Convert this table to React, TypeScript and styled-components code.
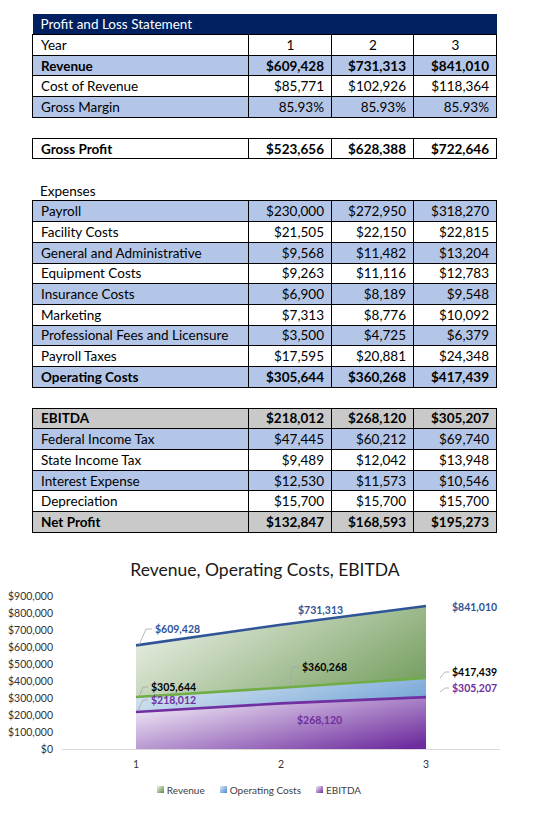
import styled, { createGlobalStyle } from 'styled-components';

const GlobalStyle = createGlobalStyle`
  body {
    margin: 0;
    background: #ffffff;
    font-family: Lato, "Liberation Sans", sans-serif;
    color: #000000;
  }
`;

type Tone = 'blue' | 'white' | 'gray';

type Row = {
  label: string;
  values: string[];
  tone: Tone;
  bold?: boolean;
  center?: boolean;
};

const TONES: Record<Tone, string> = {
  blue: '#b4c6e7',
  white: '#ffffff',
  gray: '#c9c9c9',
};

const summaryRows: Row[] = [
  { label: 'Year', values: ['1', '2', '3'], tone: 'white', center: true },
  { label: 'Revenue', values: ['$609,428', '$731,313', '$841,010'], tone: 'blue', bold: true },
  { label: 'Cost of Revenue', values: ['$85,771', '$102,926', '$118,364'], tone: 'white' },
  { label: 'Gross Margin', values: ['85.93%', '85.93%', '85.93%'], tone: 'blue' },
];

const grossRows: Row[] = [
  { label: 'Gross Profit', values: ['$523,656', '$628,388', '$722,646'], tone: 'white', bold: true },
];

const expenseRows: Row[] = [
  { label: 'Payroll', values: ['$230,000', '$272,950', '$318,270'], tone: 'blue' },
  { label: 'Facility Costs', values: ['$21,505', '$22,150', '$22,815'], tone: 'white' },
  { label: 'General and Administrative', values: ['$9,568', '$11,482', '$13,204'], tone: 'blue' },
  { label: 'Equipment Costs', values: ['$9,263', '$11,116', '$12,783'], tone: 'white' },
  { label: 'Insurance Costs', values: ['$6,900', '$8,189', '$9,548'], tone: 'blue' },
  { label: 'Marketing', values: ['$7,313', '$8,776', '$10,092'], tone: 'white' },
  { label: 'Professional Fees and Licensure', values: ['$3,500', '$4,725', '$6,379'], tone: 'blue' },
  { label: 'Payroll Taxes', values: ['$17,595', '$20,881', '$24,348'], tone: 'white' },
  { label: 'Operating Costs', values: ['$305,644', '$360,268', '$417,439'], tone: 'blue', bold: true },
];

const profitRows: Row[] = [
  { label: 'EBITDA', values: ['$218,012', '$268,120', '$305,207'], tone: 'gray', bold: true },
  { label: 'Federal Income Tax', values: ['$47,445', '$60,212', '$69,740'], tone: 'blue' },
  { label: 'State Income Tax', values: ['$9,489', '$12,042', '$13,948'], tone: 'white' },
  { label: 'Interest Expense', values: ['$12,530', '$11,573', '$10,546'], tone: 'blue' },
  { label: 'Depreciation', values: ['$15,700', '$15,700', '$15,700'], tone: 'white' },
  { label: 'Net Profit', values: ['$132,847', '$168,593', '$195,273'], tone: 'gray', bold: true },
];

const series = [
  { name: 'Revenue', values: [609428, 731313, 841010], line: '#2f5597', from: '#eef2ea', to: '#5b8c41' },
  { name: 'Operating Costs', values: [305644, 360268, 417439], line: '#70ad47', from: '#dfe9f4', to: '#4a8bcb' },
  { name: 'EBITDA', values: [218012, 268120, 305207], line: '#7030a0', from: '#f6f1fa', to: '#6e2c9e' },
];

const X = [136, 281, 426];
const BASE = 164;
const yOf = (v: number) => BASE - (v * 153) / 900000;

const labels = [
  { text: '$609,428', x: 155, y: 44, color: '#2f5597', leader: '152,44 146,44 139,60' },
  { text: '$731,313', x: 298, y: 25, color: '#2f5597', leader: '' },
  { text: '$841,010', x: 452, y: 22, color: '#2f5597', leader: '' },
  { text: '$360,268', x: 302, y: 82, color: '#000000', leader: '299,82 292,82 290,101' },
  { text: '$417,439', x: 452, y: 87, color: '#000000', leader: '449,87 445,87 440,93' },
  { text: '$305,207', x: 452, y: 103, color: '#7030a0', leader: '449,103 445,103 440,107' },
  { text: '$305,644', x: 151, y: 102, color: '#000000', leader: '148,102 143,102 139,112' },
  { text: '$218,012', x: 151, y: 115, color: '#7030a0', leader: '148,115 143,115 138,125' },
  { text: '$268,120', x: 297, y: 135, color: '#7030a0', leader: '' },
];

const Page = styled.div`
  width: 540px;
  display: flex;
  flex-direction: column;
`;

const Sheet = styled.div`
  padding: 14px 0 0 32px;
  display: flex;
  flex-direction: column;
`;

const Table = styled.table<{ $gap?: number }>`
  width: 464px;
  border-collapse: collapse;
  table-layout: fixed;
  margin-bottom: ${({ $gap }) => $gap ?? 0}px;
  font-size: 13.5px;
`;

const HeadCell = styled.td`
  height: 20px;
  padding: 0 8px;
  background: #002060;
  color: #ffffff;
  border-bottom: 1px solid #000000;
`;

const Tr = styled.tr<{ $tone: Tone; $bold?: boolean }>`
  background: ${({ $tone }) => TONES[$tone]};
  font-weight: ${({ $bold }) => ($bold ? 700 : 400)};
`;

const Td = styled.td<{ $align: 'left' | 'right' | 'center' }>`
  height: 19.7px;
  padding: 0 7px 0 8px;
  border: 1px solid #000000;
  text-align: ${({ $align }) => $align};
  white-space: nowrap;
`;

const SectionLabel = styled.div`
  height: 20px;
  line-height: 22px;
  padding-left: 8px;
  margin-top: 21px;
  font-size: 13.5px;
`;

const Chart = styled.div`
  margin-top: 22px;
  display: flex;
  flex-direction: column;
`;

const ChartTitle = styled.div`
  height: 30px;
  line-height: 30px;
  text-align: center;
  font-size: 17.5px;
  color: #1a1a1a;
  padding-right: 10px;
`;

const Legend = styled.div`
  height: 30px;
  display: flex;
  align-items: center;
  justify-content: center;
  gap: 15px;
  padding-right: 22px;
  font-size: 10px;
  color: #404040;
`;

const LegendItem = styled.div`
  display: flex;
  align-items: center;
  gap: 3px;
`;

const Swatch = styled.span<{ $from: string; $to: string }>`
  width: 7px;
  height: 7px;
  background: linear-gradient(135deg, ${({ $from }) => $from}, ${({ $to }) => $to});
`;

const DataTable = ({ rows, header, gap }: { rows: Row[]; header?: string; gap?: number }) => (
  <Table $gap={gap}>
    <colgroup>
      <col style={{ width: 216 }} />
      <col style={{ width: 83 }} />
      <col style={{ width: 82 }} />
      <col style={{ width: 83 }} />
    </colgroup>
    <tbody>
      {header && (
        <tr>
          <HeadCell colSpan={4}>{header}</HeadCell>
        </tr>
      )}
      {rows.map((row) => (
        <Tr key={row.label} $tone={row.tone} $bold={row.bold}>
          <Td $align="left">{row.label}</Td>
          {row.values.map((v, i) => (
            <Td key={i} $align={row.center ? 'center' : 'right'}>{v}</Td>
          ))}
        </Tr>
      ))}
    </tbody>
  </Table>
);

const AreaChart = () => (
  <svg width={540} height={190} viewBox="0 0 540 190">
    <defs>
      {series.map((s, i) => (
        <linearGradient key={s.name} id={`g${i}`} x1="0" y1="0.1" x2="1" y2="0.9">
          <stop offset="0" stopColor={s.from} />
          <stop offset="1" stopColor={s.to} />
        </linearGradient>
      ))}
    </defs>
    {['$900,000', '$800,000', '$700,000', '$600,000', '$500,000', '$400,000', '$300,000', '$200,000', '$100,000', '$0'].map((t, i) => (
      <text key={t} x={53} y={yOf((9 - i) * 100000) + 3.5} textAnchor="end" fontSize={10.5} fill="#333333" fontFamily="Lato, sans-serif">
        {t}
      </text>
    ))}
    {series.map((s, i) => {
      const pts = s.values.map((v, k) => `${X[k]},${yOf(v)}`).join(' ');
      return (
        <g key={s.name}>
          <polygon points={`${X[0]},${BASE} ${pts} ${X[2]},${BASE}`} fill={`url(#g${i})`} />
          <polyline points={pts} fill="none" stroke={s.line} strokeWidth={2.6} />
        </g>
      );
    })}
    <line x1={62} y1={BASE + 0.5} x2={500} y2={BASE + 0.5} stroke="#d9d9d9" strokeWidth={1} />
    {X.map((x, i) => (
      <text key={x} x={x} y={183} textAnchor="middle" fontSize={10.5} fill="#333333" fontFamily="Lato, sans-serif">
        {i + 1}
      </text>
    ))}
    {labels.map((l) => (
      <g key={l.text + l.x}>
        {l.leader && <polyline points={l.leader} fill="none" stroke="#a6a6a6" strokeWidth={0.8} />}
        <text x={l.x} y={l.y + 4} fontSize={10.5} fontWeight={700} fill={l.color} fontFamily="Lato, sans-serif">
          {l.text}
        </text>
      </g>
    ))}
  </svg>
);

export default function App() {
  return (
    <Page>
      <GlobalStyle />
      <Sheet>
        <DataTable header="Profit and Loss Statement" rows={summaryRows} gap={20} />
        <DataTable rows={grossRows} gap={0} />
        <SectionLabel>Expenses</SectionLabel>
        <DataTable rows={expenseRows} gap={20} />
        <DataTable rows={profitRows} />
      </Sheet>
      <Chart>
        <ChartTitle>Revenue, Operating Costs, EBITDA</ChartTitle>
        <AreaChart />
        <Legend>
          {series.map((s) => (
            <LegendItem key={s.name}>
              <Swatch $from={s.from} $to={s.to} />
              {s.name}
            </LegendItem>
          ))}
        </Legend>
      </Chart>
    </Page>
  );
}
